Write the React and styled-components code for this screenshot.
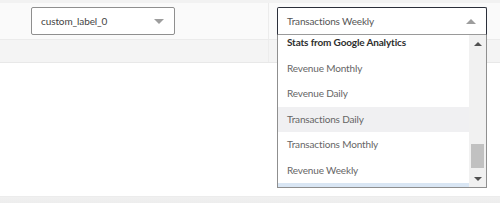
import React from "react";
import styled, { createGlobalStyle } from "styled-components";

const GlobalStyle = createGlobalStyle`
  html, body {
    margin: 0;
    padding: 0;
    background: #fff;
  }
  body {
    font-family: Lato, "Open Sans", sans-serif;
  }
`;

const Page = styled.div`
  position: relative;
  width: 500px;
  height: 203px;
  overflow: hidden;
  background: #fff;
`;

const FilterBar = styled.div`
  display: flex;
  height: 36px;
  border-top: 3px solid #f2f2f2;
  background: #fafafa;
  border-bottom: 1px solid #ebebeb;
`;

const Cell = styled.div`
  display: flex;
  align-items: flex-start;
  box-sizing: border-box;
  width: ${(p) => p.$width}px;
  padding: 4px 0 0 ${(p) => p.$pad}px;
  border-right: ${(p) => (p.$divider ? "1px solid #ececec" : "none")};
`;

const Band = styled.div`
  display: flex;
  height: 22px;
  background: #f4f4f4;
  border-bottom: 1px solid #e8e8e8;
`;

const BandCell = styled.div`
  box-sizing: border-box;
  width: ${(p) => p.$width}px;
  border-right: ${(p) => (p.$divider ? "1px solid #ececec" : "none")};
`;

const Body = styled.div`
  height: 133px;
  background: #fff;
`;

const Footer = styled.div`
  height: 8px;
  background: linear-gradient(#f0f0f0, #ececec);
  border-top: 1px solid #ececec;
`;

const SelectBox = styled.div`
  position: relative;
  display: flex;
  align-items: center;
  justify-content: space-between;
  box-sizing: border-box;
  width: ${(p) => p.$width}px;
  height: 28px;
  padding: 0 10px 0 9px;
  background: #fff;
  border: 1px solid ${(p) => (p.$open ? "#2b2f3a" : "#8f8f8f")};
  border-bottom-color: ${(p) => (p.$open ? "#9a9a9a" : "#8f8f8f")};
  border-radius: ${(p) => (p.$open ? "2px 2px 0 0" : "2px")};
  font-size: 10px;
  white-space: nowrap;
  color: ${(p) => (p.$open ? "#555" : "#444")};
  letter-spacing: ${(p) => (p.$open ? "-0.15px" : "-0.1px")};
`;

const Caret = styled.span`
  width: 0;
  height: 0;
  border-left: 5px solid transparent;
  border-right: 5px solid transparent;
  ${(p) =>
    p.$up
      ? "border-bottom: 5px solid #9d9d9d;"
      : "border-top: 5px solid #9d9d9d;"}
`;

const Menu = styled.div`
  position: absolute;
  top: 35px;
  left: 277px;
  display: flex;
  box-sizing: border-box;
  width: 210px;
  height: 153px;
  background: #fff;
  border: 1px solid #8f8f8f;
  border-top: none;
  overflow: hidden;
`;

const OptionList = styled.div`
  flex: 1;
  overflow: hidden;
`;

const Scroller = styled.div`
  margin-top: -5px;
`;

const Option = styled.div`
  box-sizing: border-box;
  height: 25.5px;
  line-height: 25.5px;
  padding-left: 9px;
  font-size: 10px;
  white-space: nowrap;
  letter-spacing: -0.15px;
  color: ${(p) => (p.$group ? "#2e2e2e" : "#666")};
  font-weight: ${(p) => (p.$group ? 700 : 400)};
  background: ${(p) =>
    p.$selected ? "#d9e6f4" : p.$hover ? "#f0f0f2" : "#fff"};
`;

const ScrollTrack = styled.div`
  display: flex;
  flex-direction: column;
  align-items: center;
  width: 17px;
  background: #f1f1f1;
`;

const ScrollArrow = styled.div`
  display: flex;
  align-items: center;
  justify-content: center;
  width: 17px;
  height: 17px;
  &::after {
    content: "";
    border-left: 4px solid transparent;
    border-right: 4px solid transparent;
    ${(p) =>
      p.$up
        ? "border-bottom: 4px solid #505050;"
        : "border-top: 4px solid #505050;"}
  }
`;

const ScrollSpace = styled.div`
  flex: 1;
  width: 13px;
  display: flex;
  flex-direction: column;
`;

const Thumb = styled.div`
  margin-top: ${(p) => p.$offset}px;
  height: ${(p) => p.$size}px;
  background: #c1c1c1;
`;

const options = [
  { label: "Stats from Google Analytics", group: true },
  { label: "Revenue Monthly" },
  { label: "Revenue Daily" },
  { label: "Transactions Daily", hover: true },
  { label: "Transactions Monthly" },
  { label: "Revenue Weekly" },
  { label: "Transactions Weekly", selected: true },
];

export default function App() {
  return (
    <Page>
      <GlobalStyle />
      <FilterBar>
        <Cell $width={269} $pad={31} $divider>
          <SelectBox $width={144}>
            custom_label_0
            <Caret />
          </SelectBox>
        </Cell>
        <Cell $width={231} $pad={8}>
          <SelectBox $width={210} $open>
            Transactions Weekly
            <Caret $up />
          </SelectBox>
        </Cell>
      </FilterBar>
      <Band>
        <BandCell $width={269} $divider />
        <BandCell $width={231} />
      </Band>
      <Body />
      <Footer />
      <Menu>
        <OptionList>
          <Scroller>
            {options.map((o) => (
              <Option
                key={o.label}
                $group={o.group}
                $hover={o.hover}
                $selected={o.selected}
              >
                {o.label}
              </Option>
            ))}
          </Scroller>
        </OptionList>
        <ScrollTrack>
          <ScrollArrow $up />
          <ScrollSpace>
            <Thumb $offset={92} $size={24} />
          </ScrollSpace>
          <ScrollArrow />
        </ScrollTrack>
      </Menu>
    </Page>
  );
}
